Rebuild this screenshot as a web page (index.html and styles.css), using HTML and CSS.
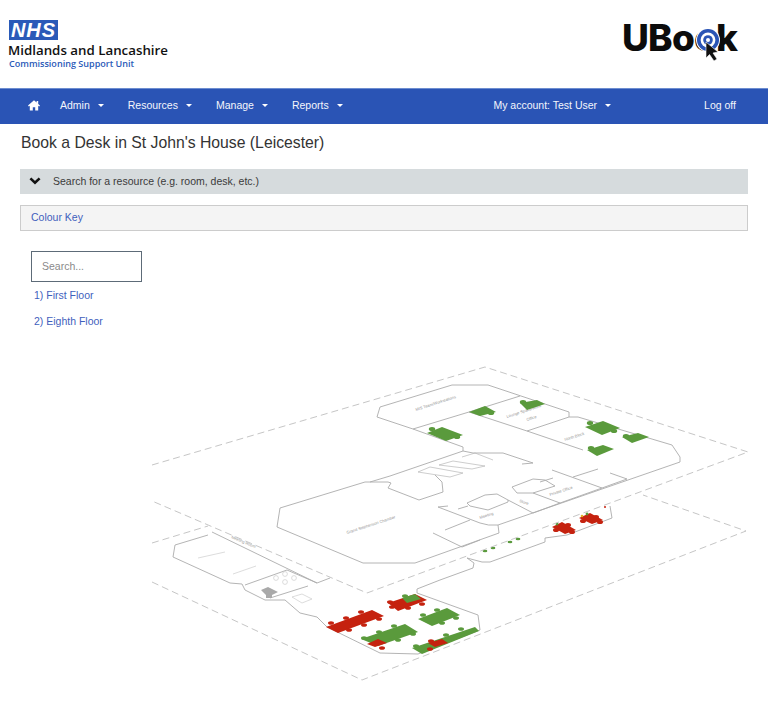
FILE: index.html
```html
<!DOCTYPE html>
<html lang="en">
<head>
<meta charset="utf-8">
<title>Book a Desk</title>
<link rel="stylesheet" href="styles.css">
</head>
<body>
<header class="brand">
  <div class="csu">
    <div class="nhs">NHS</div>
    <div class="csu-name">Midlands and Lancashire</div>
    <div class="csu-sub">Commissioning Support Unit</div>
  </div>
  <div class="ubook">
    <span class="ubook-text">UBook</span>
    <svg class="ubook-mark" viewBox="0 0 34 40" aria-hidden="true">
      <circle cx="13" cy="12" r="12" fill="#fff"/>
      <circle cx="13" cy="12" r="11" fill="#2a54b5"/>
      <circle cx="13" cy="12" r="7.4" fill="#fff"/>
      <circle cx="13" cy="12" r="4.8" fill="#2a54b5"/>
      <circle cx="13" cy="12" r="2" fill="#fff"/>
      <path d="M11 14 L11 30 L14.5 26.5 L19 33 L22 31 L18 25 L23 24 Z" fill="#111" stroke="#fff" stroke-width=".6"/>
    </svg>
  </div>
</header>
<nav class="nav">
  <div class="nav-left">
    <a class="nav-home" href="#" aria-label="Home">
      <svg viewBox="0 0 12 11" width="12" height="11"><path d="M6 0.3 L0 5.6 L0.8 6.5 L1.8 5.7 L1.8 10.6 L4.8 10.6 L4.8 7.3 L7.2 7.3 L7.2 10.6 L10.2 10.6 L10.2 5.7 L11.2 6.5 L12 5.6 L10.2 4 L10.2 1 L8.6 1 L8.6 2.6 Z" fill="#fff"/></svg>
    </a>
    <a class="nav-link caret" href="#">Admin</a>
    <a class="nav-link caret" href="#">Resources</a>
    <a class="nav-link caret" href="#">Manage</a>
    <a class="nav-link caret" href="#">Reports</a>
  </div>
  <div class="nav-right">
    <a class="nav-link caret" href="#">My account: Test User</a>
    <a class="nav-link" href="#">Log off</a>
  </div>
</nav>
<main>
  <h1 class="title">Book a Desk in St John's House (Leicester)</h1>
  <div class="search-bar">
    <svg class="chev" viewBox="0 0 12 8" width="12" height="8"><path d="M1.4 1.4 L6 5.8 L10.6 1.4" fill="none" stroke="#111" stroke-width="2.6"/></svg>
    <span>Search for a resource (e.g. room, desk, etc.)</span>
  </div>
  <div class="key"><a href="#">Colour Key</a></div>
  <div class="floors">
    <input class="floor-search" type="text" placeholder="Search...">
    <a class="floor-link" href="#">1) First Floor</a>
    <a class="floor-link" href="#">2) Eighth Floor</a>
  </div>
  <svg class="plans" viewBox="0 340 768 388" width="768" height="388" role="img" aria-label="Floor plans">
    <!-- lower floor -->
    <g class="plane">
      <path d="M152 543 L208 526"/>
      <path d="M152 582 L362 680 L746 531 L643 495"/>
    </g>
    <g class="wall">
      <path d="M208 535 L175 545 L173 557 L230 583 L242 584 L245 590 L265 600 L285 600 L300 613 L317 617 L327 627 L380 653 L418 654 L480 630 L478 615 L417 593 L417 589 L440 580 L473 568 L474 563 L467 558 L482 562 L490 562 L545 542 L545 538 L567 535 L612 518 L610 506"/>
      <path d="M212 532 L317 583 L330 578"/>
      <path d="M245 585 L287 570 L317 583"/>
      <path d="M270 598 L308 586"/>
    </g>
    <g class="wall-light">
      <path d="M198 558 L225 552 M233 574 L256 566"/>
      <circle cx="276" cy="578" r="2.4"/><circle cx="285" cy="574" r="2.4"/><circle cx="294" cy="578" r="2.4"/><circle cx="285" cy="582" r="2.4"/>
      <path d="M292 597 L302 594 L312 599 L302 603 Z"/>
    </g>
    <path class="grey-block" d="M261 590 L268 587 L278 592 L272 595 L272 598 L266 598 L266 595 Z"/>
    <text class="label" transform="translate(231 538) rotate(23)">Meeting Room</text>
    <g class="red">
      <path d="M326 627 L372 610 L384 616 L338 633 Z"/>
      <path d="M388 603 L415 594 L427 600 L398 611 Z"/>
      <path d="M552 527 L562 522 L576 530 L565 534 Z"/>
      <path d="M579 518 L590 513 L603 520 L592 524 Z"/>
      <ellipse cx="331" cy="623" rx="3" ry="1.8"/><ellipse cx="346" cy="618" rx="3" ry="1.8"/><ellipse cx="361" cy="612" rx="3" ry="1.8"/>
      <ellipse cx="349" cy="630" rx="3" ry="1.8"/><ellipse cx="364" cy="625" rx="3" ry="1.8"/><ellipse cx="379" cy="619" rx="3" ry="1.8"/>
      <ellipse cx="390" cy="602" rx="3" ry="1.8"/><ellipse cx="392" cy="607" rx="3" ry="1.8"/><ellipse cx="408" cy="608" rx="3" ry="1.8"/><ellipse cx="422" cy="604" rx="3" ry="1.8"/>
      <ellipse cx="556" cy="530" rx="3" ry="2"/><ellipse cx="572" cy="532" rx="3" ry="2"/><ellipse cx="583" cy="521" rx="3" ry="2"/><ellipse cx="600" cy="522" rx="3" ry="2"/><ellipse cx="568" cy="525" rx="3" ry="2"/><ellipse cx="596" cy="517" rx="3" ry="2"/>
      <circle cx="605" cy="507" r="1"/>
    </g>
    <g class="green">
      <path d="M402 598 L415 594 L421 599 L407 603 Z"/>
      <path d="M418 619 L447 608 L460 615 L432 626 Z"/>
      <path d="M361 639 L405 624 L418 632 L378 646 Z"/>
      <path d="M412 648 L475 627 L479 631 L422 654 Z"/>
      <ellipse cx="405" cy="596" rx="3" ry="1.8"/><ellipse cx="423" cy="615" rx="3" ry="1.8"/><ellipse cx="437" cy="610" rx="3" ry="1.8"/><ellipse cx="442" cy="623" rx="3" ry="1.8"/><ellipse cx="456" cy="618" rx="3" ry="1.8"/>
      <ellipse cx="364" cy="638" rx="3" ry="1.8"/><ellipse cx="379" cy="632" rx="3" ry="1.8"/><ellipse cx="394" cy="626" rx="3" ry="1.8"/><ellipse cx="398" cy="640" rx="3" ry="1.8"/><ellipse cx="413" cy="634" rx="3" ry="1.8"/>
      <ellipse cx="416" cy="646" rx="3" ry="1.8"/><ellipse cx="446" cy="635" rx="3" ry="1.8"/><ellipse cx="461" cy="629" rx="3" ry="1.8"/>
      <ellipse cx="485" cy="551" rx="2.4" ry="1.2"/><ellipse cx="493" cy="548" rx="2.4" ry="1.2"/><ellipse cx="510" cy="542" rx="2.4" ry="1.2"/><ellipse cx="518" cy="539" rx="2.4" ry="1.2"/>
      <circle cx="557" cy="524" r="1.4"/><circle cx="587" cy="514" r="1.4"/>
    </g>
    <g class="red">
      <path d="M367 644 L378 639 L387 643 L375 647 Z"/>
      <path d="M428 643 L442 639 L448 643 L435 647 Z"/>
      <ellipse cx="382" cy="648" rx="3" ry="1.8"/><ellipse cx="431" cy="641" rx="3" ry="1.8"/><ellipse cx="430" cy="649" rx="3" ry="1.8"/>
    </g>
    <circle class="amber" cx="582" cy="516" r="1.3"/>

    <!-- upper floor -->
    <path class="sheet" d="M152 465 L485 367 L748 452 L367 593 L152 501 Z"/>
    <g class="plane">
      <path d="M152 465 L485 367 L748 452 L367 593 L152 501"/>
    </g>
    <g class="wall">
      <path d="M377 417 L380 407 L452 385 L488 385 L569 412 L569 417 L578 417 L672 445 L680 457 L680 462 L498 525 L499 533 L415 563 L363 563 L277 527 L280 508 L365 482 L388 482 L391 483 L388 488 L419 500 L443 492 L442 482 L435 475"/>
      <path d="M377 417 L413 429 L463 447 L463 451 L390 476 L370 482"/>
      <path d="M413 429 L469 412 L520 396"/>
      <path d="M469 412 L527 431 L583 450 M527 431 L569 417"/>
      <path d="M463 451 L473 453 L503 453 L533 463 M522 464 L533 463"/>
      <path d="M552 470 L602 488 L627 479 M573 477 L598 469 M610 473 L627 479"/>
      <path d="M438 507 L448 506 M438 507 L480 523 Q488 526 498 525"/>
      <path d="M467 503 L485 495 L497 494 L508 500 L508 502 L488 510 L470 506 Z"/>
      <path d="M508 500 L533 513 L560 503 L533 493"/>
      <path d="M512 487 L533 479 L545 480 L555 486 L533 493 L517 493 Z"/>
      <path d="M553 478 L540 482 M602 488 L560 503"/>
      <path d="M458 509 L468 506 M445 530 L470 520 M433 533 L462 547 L480 540"/>
    </g>
    <g class="wall-thin">
      <path d="M418 472 L430 467 L463 473 L450 477 Z"/>
      <path d="M439 465 L453 461 L485 466 L472 469 Z"/>
      <path d="M462 457 L475 453 L493 460"/>
    </g>
    <text class="label" transform="translate(416 411) rotate(-18)">MIS Team/Workstations</text>
    <text class="label" transform="translate(507 418) rotate(-18)">Lounge Space/Work</text>
    <text class="label" transform="translate(527 421) rotate(-18)">Office</text>
    <text class="label" transform="translate(565 441) rotate(-18)">North Block</text>
    <text class="label" transform="translate(347 534) rotate(-18)">Grand Stephenson Chamber</text>
    <text class="label" transform="translate(480 519) rotate(-18)">Meeting</text>
    <text class="label" transform="translate(519 502) rotate(18)">Store</text>
    <text class="label" transform="translate(550 496) rotate(-18)">Private Office</text>
    <g class="green">
      <path d="M427 433 L442 427 L463 435 L446 441 Z"/>
      <path d="M469 412 L485 406 L496 412 L480 416 Z"/>
      <path d="M520 403 L537 400 L545 404 L527 410 Z"/>
      <path d="M585 427 L603 421 L620 428 L602 435 Z"/>
      <path d="M622 437 L638 433 L649 437 L632 443 Z"/>
      <path d="M587 450 L603 445 L614 449 L597 456 Z"/>
      <ellipse cx="432" cy="429" rx="3.2" ry="2"/><ellipse cx="457" cy="437" rx="3.2" ry="2"/>
      <ellipse cx="491" cy="413" rx="3.2" ry="2"/><ellipse cx="523" cy="402" rx="3.2" ry="2"/>
      <ellipse cx="590" cy="423" rx="3.2" ry="2"/><ellipse cx="614" cy="431" rx="3.2" ry="2"/><ellipse cx="626" cy="436" rx="3.2" ry="2"/><ellipse cx="591" cy="448" rx="3.2" ry="2"/>
    </g>
  </svg>
</main>
</body>
</html>
```
FILE: styles.css
```css
* { box-sizing: border-box; }
html, body { margin: 0; padding: 0; background: #fff; }
body { width: 768px; height: 728px; overflow: hidden; font-family: "Liberation Sans", Arial, sans-serif; font-size: 12px; color: #333; }
a { text-decoration: none; color: #3f5fbd; }

.brand { height: 88px; display: flex; justify-content: space-between; padding: 20px 30px 0 8px; }
.csu { display: flex; flex-direction: column; align-items: flex-start; }
.nhs { width: 49px; height: 20px; background: #2a5ab8; color: #fff; font: italic 700 20px/20px "Liberation Sans", sans-serif; letter-spacing: 1px; text-align: center; margin-left: 1px; }
.csu-name { font: 600 13.3px/15px "Open Sans", sans-serif; color: #111; margin-top: 3px; white-space: nowrap; }
.csu-sub { font: 600 9.05px/11px "Open Sans", sans-serif; color: #2a5ab8; margin-left: 1px; white-space: nowrap; }
.ubook { position: relative; width: 114px; height: 40px; margin-top: -2px; }
.ubook-text { font: 800 37px/40px "Inter", sans-serif; color: #0c0c0c; letter-spacing: -.8px; white-space: nowrap; margin-left: -2px; display: block; }
.ubook-mark { position: absolute; left: 71px; top: 10px; width: 34px; height: 40px; }

.nav { height: 36px; background: #2a54b5; border-top: 1px solid #6d8dd0; display: flex; justify-content: space-between; align-items: center; padding: 0 32px 3px 28px; color: #fff; }
.nav-left, .nav-right { display: flex; align-items: center; }
.nav-left { gap: 24px; }
.nav-right { gap: 93px; }
.nav-home { display: flex; width: 12px; margin-right: -4px; }
.nav-link { color: #f4f6fc; font: 400 10.5px/16px "Liberation Sans", sans-serif; white-space: nowrap; }
.caret::after { content: ""; display: inline-block; margin-left: 8px; vertical-align: 2px; border-top: 3px solid #fff; border-left: 3px solid transparent; border-right: 3px solid transparent; }

.title { margin: 0; padding: 9px 0 0 21px; height: 45px; font: 400 15.75px/20px "Liberation Sans", sans-serif; color: #333; }
.search-bar { margin: 0 20px; height: 25px; background: #d6dbdd; display: flex; align-items: center; padding: 0 0 1px 9px; gap: 12px; font: 400 10.5px/14px "Liberation Sans", sans-serif; color: #3a3a3a; }
.key { margin: 11px 20px 0; height: 26px; background: #f4f4f4; border: 1px solid #ccc; padding: 0 10px 2px; display: flex; align-items: center; font: 400 10.5px/14px "Liberation Sans", sans-serif; }
.floors { display: flex; flex-direction: column; align-items: flex-start; padding: 20px 0 0 31px; height: 109px; }
.floor-search { width: 111px; height: 31px; border: 1px solid #5d6b78; background: #fff; padding: 0 10px 2px; font: 400 10.5px "Liberation Sans", sans-serif; border-radius: 0; outline: none; }
.floor-search::placeholder { color: #8a8a8a; opacity: 1; }
.floor-link { font: 400 10.5px/14px "Liberation Sans", sans-serif; margin: 6px 0 6px 3px; }
.floor-link + .floor-link { margin-top: 6px; }

.plans { display: block; }
.plane path { fill: none; stroke: #c6c6c6; stroke-width: 1; stroke-dasharray: 7 4; }
.wall path { fill: none; stroke: #ababab; stroke-width: .9; }
.wall-thin path { fill: none; stroke: #b8b8b8; stroke-width: .7; }
.wall-light circle, .wall-light path { fill: none; stroke: #cdcdcd; stroke-width: .7; }
.sheet { fill: #fff; }
.grey-block { fill: #a9a9a9; }
.label { font: 400 4px "Liberation Sans", sans-serif; fill: #999; }
.green path, .green circle, .green ellipse { fill: #5a9a3c; }
.red path, .red circle, .red ellipse { fill: #c5220f; }
.amber { fill: #e2b02a; }
```
